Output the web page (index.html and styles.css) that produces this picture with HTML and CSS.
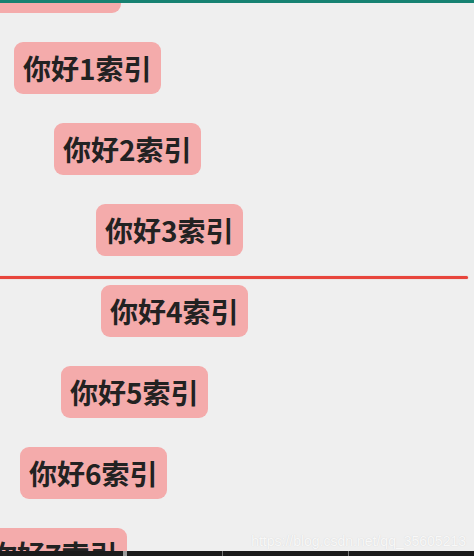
FILE: index.html
```html
<!DOCTYPE html>
<html lang="zh-CN">
<head>
    <meta charset="UTF-8">
    <meta name="viewport" content="width=device-width, initial-scale=1.0">
    <title>索引列表</title>
    <link rel="stylesheet" href="styles.css">
</head>
<body>
    <div class="screen">
        <!-- 顶部标题栏底边 -->
        <div class="toolbar-edge"></div>

        <div class="list-area">
            <div class="item-list">
                <div class="item"><span class="label">你好0索引</span></div>
                <div class="item"><span class="label">你好1索引</span></div>
                <div class="item"><span class="label">你好2索引</span></div>
                <div class="item"><span class="label">你好3索引</span></div>
                <div class="item"><span class="label">你好4索引</span></div>
                <div class="item"><span class="label">你好5索引</span></div>
                <div class="item"><span class="label">你好6索引</span></div>
                <div class="item"><span class="label">你好7索引</span></div>
            </div>

            <!-- 中线分割 -->
            <div class="center-line"></div>

            <div class="watermark">https://blog.csdn.net/qq_35605213</div>
        </div>

        <!-- 底部导航栏 -->
        <div class="nav-bar"></div>
    </div>
</body>
</html>
```

FILE: styles.css
```css
* {
    margin: 0;
    padding: 0;
    box-sizing: border-box;
}

body {
    background-color: #efefef;
    font-family: "Noto Sans CJK SC", "Noto Sans", sans-serif;
}

.screen {
    width: 474px;
    height: 556px;
    display: flex;
    flex-direction: column;
    overflow: hidden;
}

.toolbar-edge {
    height: 3px;
    background: #168272;
    flex-shrink: 0;
}

.list-area {
    position: relative;
    flex: 1;
    overflow: hidden;
    background: #efefef;
}

.item-list {
    display: flex;
    flex-direction: column;
    gap: 29px;
    margin-top: -42px;
}

.item {
    display: flex;
}

.label {
    display: block;
    height: 52px;
    line-height: 52px;
    padding: 0 9px;
    background: #f4abab;
    border-radius: 9px;
    color: #222;
    font-size: 28px;
    font-weight: bold;
    white-space: nowrap;
}

/* 弧形排列的偏移 */
.item:nth-child(1) { margin-left: -26px; }
.item:nth-child(2) { margin-left: 14px; }
.item:nth-child(3) { margin-left: 54px; }
.item:nth-child(4) { margin-left: 96px; }
.item:nth-child(5) { margin-left: 101px; }
.item:nth-child(6) { margin-left: 61px; }
.item:nth-child(7) { margin-left: 20px; }
.item:nth-child(8) { margin-left: -20px; }

.center-line {
    position: absolute;
    top: 273px;
    left: 0;
    width: 468px;
    height: 3px;
    background: #e8453c;
    border-radius: 0 2px 2px 0;
    box-shadow: 0 0 1px rgba(232, 69, 60, 0.6);
}

.watermark {
    position: absolute;
    right: 8px;
    bottom: 2px;
    font-family: "Liberation Sans", Arial, sans-serif;
    font-size: 14px;
    color: rgba(255, 255, 255, 0.85);
    text-shadow: 0 0 1px #cfcfcf;
}

.nav-bar {
    height: 5px;
    flex-shrink: 0;
    background:
        linear-gradient(to right,
            transparent 123px, #9a9a9a 123px, #9a9a9a 127px, transparent 127px,
            transparent 222px, #777 222px, #777 223px, transparent 223px,
            transparent 348px, #777 348px, #777 349px, transparent 349px),
        #1b1b1b;
}
```
